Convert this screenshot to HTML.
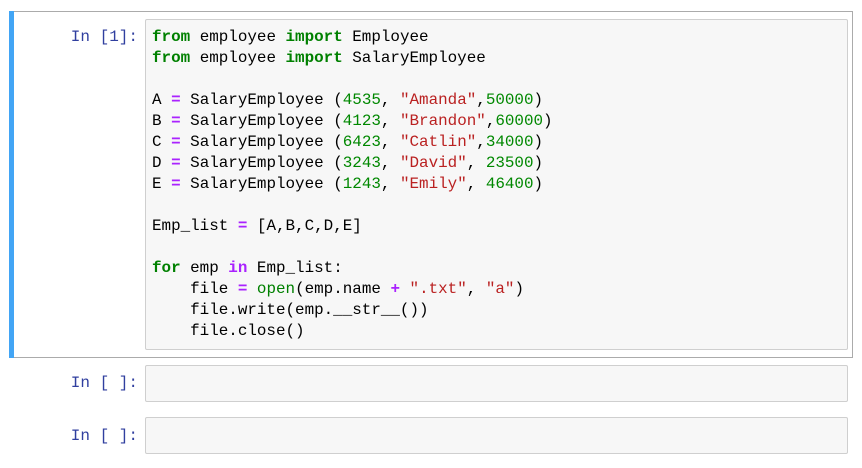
<!DOCTYPE html><html><head><style>
body{margin:0;background:#fff;width:862px;height:468px;overflow:hidden;font-family:"Liberation Mono",monospace;}
.sel{position:absolute;left:9px;top:11px;width:843px;height:345px;border:1px solid #ababab;border-left:none;}
.bar{position:absolute;left:9px;top:11px;width:5px;height:347px;background:#42a5f5;}
.box{position:absolute;left:145px;width:701px;background:#f7f7f7;border:1px solid #cfcfcf;border-radius:2px;}
.p{position:absolute;width:138px;text-align:right;color:#303f9f;font-size:16px;}
pre{margin:0;padding:7px 6px;font:15.9px/21px "Liberation Mono",monospace;color:#000;}
.k{color:#008000;font-weight:bold}.s{color:#ba2121}.n{color:#080}.o{color:#a2f;font-weight:bold}.b{color:#008000}
</style></head><body>
<div class="sel"></div><div class="bar"></div>
<div class="p" style="top:28px">In [1]:</div>
<div class="box" style="top:19px;height:329px"><pre><span class="k">from</span> employee <span class="k">import</span> Employee
<span class="k">from</span> employee <span class="k">import</span> SalaryEmployee

A <span class="o">=</span> SalaryEmployee (<span class="n">4535</span>, <span class="s">"Amanda"</span>,<span class="n">50000</span>)
B <span class="o">=</span> SalaryEmployee (<span class="n">4123</span>, <span class="s">"Brandon"</span>,<span class="n">60000</span>)
C <span class="o">=</span> SalaryEmployee (<span class="n">6423</span>, <span class="s">"Catlin"</span>,<span class="n">34000</span>)
D <span class="o">=</span> SalaryEmployee (<span class="n">3243</span>, <span class="s">"David"</span>, <span class="n">23500</span>)
E <span class="o">=</span> SalaryEmployee (<span class="n">1243</span>, <span class="s">"Emily"</span>, <span class="n">46400</span>)

Emp_list <span class="o">=</span> [A,B,C,D,E]

<span class="k">for</span> emp <span class="o">in</span> Emp_list:
    file <span class="o">=</span> <span class="b">open</span>(emp.name <span class="o">+</span> <span class="s">".txt"</span>, <span class="s">"a"</span>)
    file.write(emp.__str__())
    file.close()</pre></div>
<div class="p" style="top:374px">In [ ]:</div>
<div class="box" style="top:365px;height:35px"></div>
<div class="p" style="top:427px">In [ ]:</div>
<div class="box" style="top:417px;height:35px"></div>
</body></html>
